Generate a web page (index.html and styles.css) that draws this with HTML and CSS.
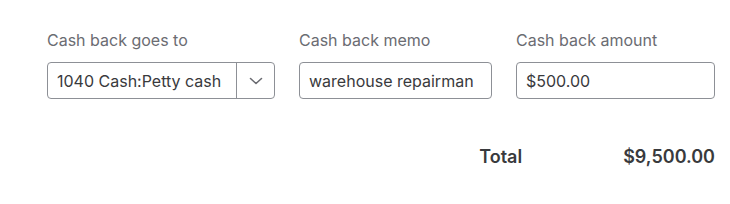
FILE: index.html
```html
<!DOCTYPE html>
<html>
<head>
<meta charset="utf-8">
<link rel="stylesheet" href="styles.css">
</head>
<body>
<div class="page">
  <div class="fields">
    <div class="field f-account">
      <label class="label">Cash back goes to</label>
      <div class="box select">
        <span class="value">1040 Cash:Petty cash</span>
        <span class="caret">
          <svg width="14" height="8" viewBox="0 0 14 8"><path d="M1.5 1.5 L7 6.5 L12.5 1.5" fill="none" stroke="#6b6c72" stroke-width="1.6" stroke-linecap="round" stroke-linejoin="round"/></svg>
        </span>
      </div>
    </div>
    <div class="field f-memo">
      <label class="label">Cash back memo</label>
      <div class="box"><span class="value">warehouse repairman</span></div>
    </div>
    <div class="field f-amount">
      <label class="label">Cash back amount</label>
      <div class="box"><span class="value">$500.00</span></div>
    </div>
  </div>
  <div class="total">
    <span class="total-label">Total</span>
    <span class="total-value">$9,500.00</span>
  </div>
</div>
</body>
</html>
```
FILE: styles.css
```css
html, body {
  margin: 0;
  padding: 0;
  background: #ffffff;
}
body {
  font-family: "Inter", "Noto Sans", sans-serif;
  color: #393a3d;
}
.page {
  padding: 30px 15px 0 47px;
  width: 668px;
}
.fields {
  display: flex;
  gap: 24px;
}
.field {
  display: flex;
  flex-direction: column;
}
.f-account { width: 228px; }
.f-memo { width: 193px; }
.f-amount { width: 199px; }
.label {
  font-size: 16px;
  line-height: 20px;
  color: #6b6c72;
  height: 20px;
  margin-bottom: 12px;
}
.box {
  box-sizing: border-box;
  height: 37px;
  border: 1px solid #8d9096;
  border-radius: 4px;
  display: flex;
  align-items: center;
  padding-left: 9px;
  font-size: 16px;
  color: #393a3d;
  white-space: nowrap;
  overflow: hidden;
}
.select .value {
  flex: 1;
}
.caret {
  width: 37px;
  height: 100%;
  border-left: 1px solid #8d9096;
  display: flex;
  align-items: center;
  justify-content: center;
}
.total {
  display: flex;
  justify-content: flex-end;
  align-items: center;
  margin-top: 47px;
  font-weight: 600;
  font-size: 18px;
  color: #393a3d;
}
.total-label {
  margin-right: 101px;
}
```
